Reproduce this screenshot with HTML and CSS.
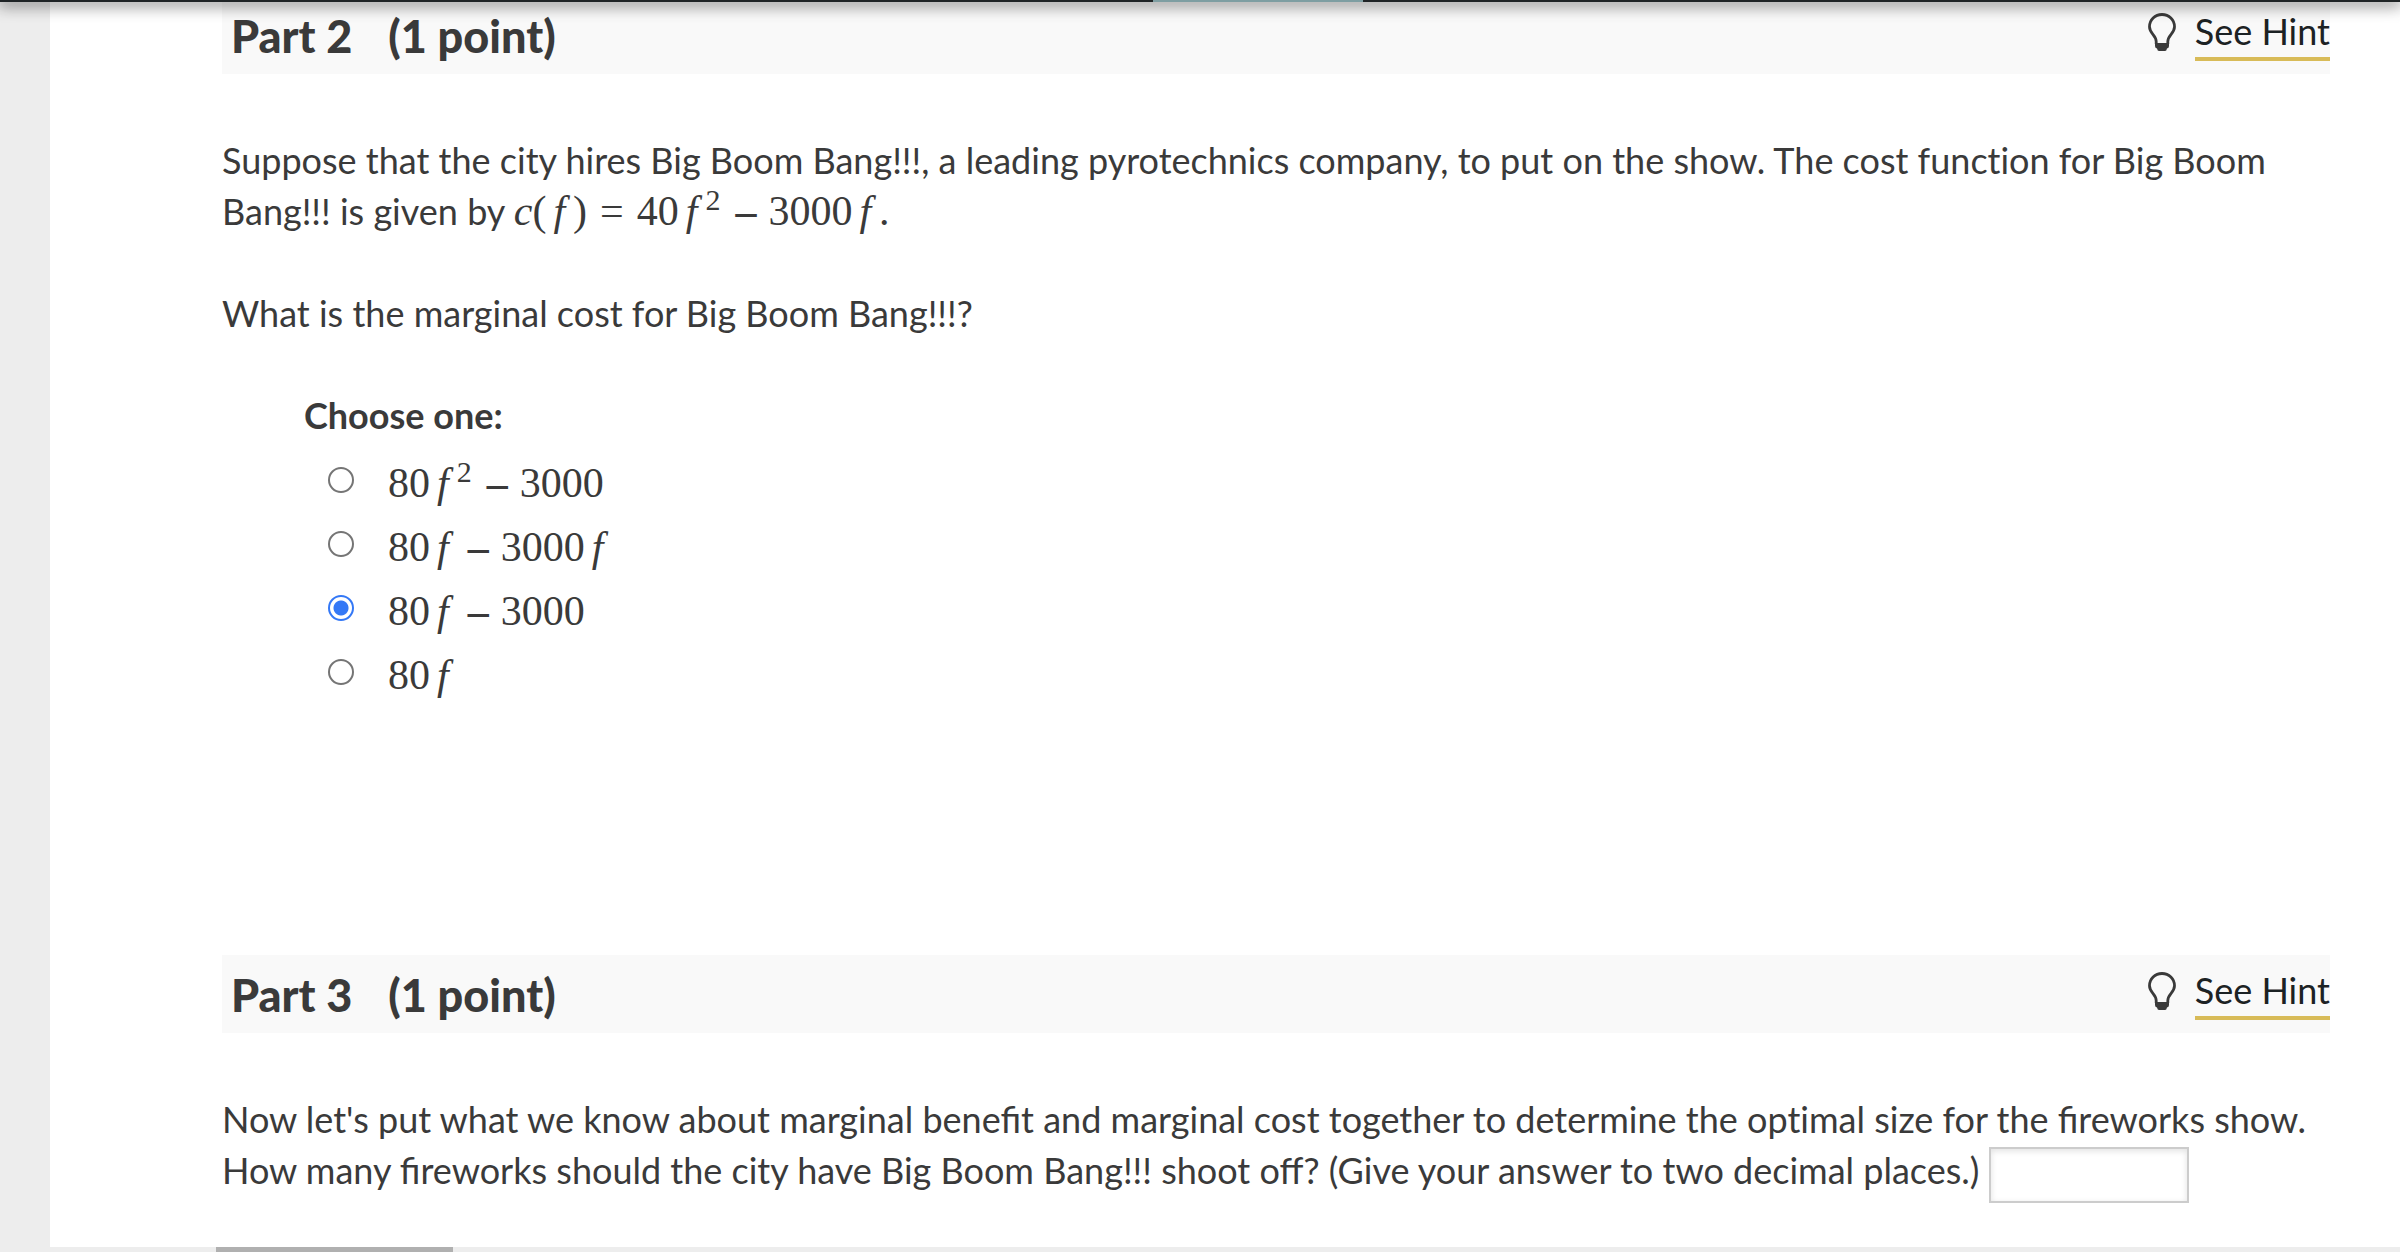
FILE: index.html
```
<!DOCTYPE html>
<html lang="en">
<head>
<meta charset="utf-8">
<title>Fireworks show: marginal cost</title>
<link rel="stylesheet" href="styles.css">
</head>
<body>
<div class="topbar"><div class="topbar-tab"></div></div>
<main class="page">
  <section class="part">
    <header class="part-header">
      <h2 class="part-title"><span>Part 2</span><span>(1 point)</span></h2>
      <div class="hint">
        <svg class="bulb" viewBox="0 0 28 38" aria-hidden="true"><path d="M8.200 31V28.500C8.200 22 1.500 20.500 1.500 13.700C1.500 6.500 7 1.500 14 1.500S26.500 6.500 26.500 13.700C26.500 20.500 19.800 22 19.800 28.500V31" fill="none" stroke="#3a3a3a" stroke-width="2.800"/><path d="M7 30H21V33Q21 35 19 35.500Q18.500 38 17 38H11Q9.500 38 9 35.500Q7 35 7 33Z" fill="#3a3a3a"/></svg>
        <a class="hint-link" href="#hint-2">See Hint</a>
      </div>
    </header>
    <div class="part-body">
      <p class="text">Suppose that the city hires Big Boom Bang!!!, a leading pyrotechnics company, to put on the show. The cost <span class="plain">function</span> for Big Boom Bang!!! is given by <span class="math"><i>c</i>(<i class="f">f</i>)<span class="rel">=</span>40<i class="f">f</i><sup>2</sup><span class="op">–</span>3000<i class="f">f</i>.</span></p>
      <p class="text">What is the marginal cost for Big Boom Bang!!!?</p>
      <fieldset class="choices">
        <legend class="choices-title">Choose one:</legend>
        <label class="choice"><input class="radio" type="radio" name="cost"><span class="math">80<i class="f">f</i><sup>2</sup><span class="op">–</span>3000</span></label>
        <label class="choice"><input class="radio" type="radio" name="cost"><span class="math">80<i class="f">f</i><span class="op">–</span>3000<i class="f">f</i></span></label>
        <label class="choice"><input class="radio" type="radio" name="cost" checked><span class="math">80<i class="f">f</i><span class="op">–</span>3000</span></label>
        <label class="choice"><input class="radio" type="radio" name="cost"><span class="math">80<i class="f">f</i></span></label>
      </fieldset>
    </div>
  </section>
  <section class="part">
    <header class="part-header">
      <h2 class="part-title"><span>Part 3</span><span>(1 point)</span></h2>
      <div class="hint">
        <svg class="bulb" viewBox="0 0 28 38" aria-hidden="true"><path d="M8.200 31V28.500C8.200 22 1.500 20.500 1.500 13.700C1.500 6.500 7 1.500 14 1.500S26.500 6.500 26.500 13.700C26.500 20.500 19.800 22 19.800 28.500V31" fill="none" stroke="#3a3a3a" stroke-width="2.800"/><path d="M7 30H21V33Q21 35 19 35.500Q18.500 38 17 38H11Q9.500 38 9 35.500Q7 35 7 33Z" fill="#3a3a3a"/></svg>
        <a class="hint-link" href="#hint-3">See Hint</a>
      </div>
    </header>
    <div class="part-body">
      <p class="text"><label for="answer">Now let's put what we know about marginal benefit and marginal cost together to determine the <span class="plain">optimal</span> size for the fireworks show. How many fireworks should the city have Big Boom Bang!!! shoot off? (Give your answer to two decimal places.)</label><input class="answer" id="answer" type="text"></p>
    </div>
  </section>
</main>
<div class="scroll-track"><div class="scroll-thumb"></div></div>
</body>
</html>
```
FILE: styles.css
```
* {
  box-sizing: border-box;
}

html {
  height: 100%;
}

body {
  display: flex;
  flex-direction: column;
  height: 100%;
  margin: 0;
  overflow: hidden;
  background: #ededed;
  color: #3a3a3a;
  font: 36px/51px Lato, sans-serif;
}

/* Navigation edge that stays over the scrolled page */
.topbar {
  position: fixed;
  inset: 0 0 auto;
  z-index: 1;
  display: flex;
  height: 2px;
  padding-left: 1153px;
  background: #1f2426;
  box-shadow: 0 0 16px 2px rgba(0, 0, 0, 0.8);
}

.topbar-tab {
  width: 210px;
  background: #7e9ea2;
}

.page {
  flex: 1;
  min-height: 0;
  margin: -4px 0 0 50px;
  padding: 0 70px 0 172px;
  background: #fff;
}

.part {
  margin-bottom: 248px;
}

.part-header {
  display: flex;
  justify-content: space-between;
  align-items: flex-start;
  height: 78px;
  padding-left: 9px;
  background: #f9f9f9;
}

.part-title {
  display: flex;
  gap: 36px;
  margin: 0;
  padding-top: 15px;
  font-family: "Lato Black", Lato, sans-serif;
  font-size: 45px;
  font-weight: 900;
}

.hint {
  display: flex;
  align-items: flex-start;
  gap: 19px;
  padding-top: 10px;
}

.bulb {
  width: 28px;
  height: 38px;
  margin-top: 7px;
}

.hint-link {
  height: 55px;
  border-bottom: 4px solid #d8bb58;
  color: #1c2224;
  text-decoration: none;
}

.part-body {
  padding-top: 61px;
}

.text {
  margin: 0 0 51px;
}

/* Keeps "ti" as two separate letters */
.plain {
  font-variant-ligatures: none;
}

.math {
  font: 42px/1 "Liberation Serif", serif;
  white-space: nowrap;
}

.math sup {
  margin-right: 4px;
  font-size: 30px;
  line-height: 0;
  vertical-align: 15px;
}

.f {
  margin: 0 8px 0 7px;
}

.op {
  margin: 0 12px 0 11px;
  font-weight: 700;
}

.rel {
  margin: 0 13px;
}

.choices {
  margin: 0;
  padding: 0 0 0 82px;
  border: 0;
}

.choices-title {
  margin: 0 0 10px;
  padding: 0;
  font-weight: 700;
}

.choice {
  display: flex;
  align-items: center;
  gap: 34px;
  height: 64px;
  padding-left: 24px;
}

.radio {
  appearance: none;
  width: 26px;
  height: 26px;
  margin: 0 0 6px;
  border: 2px solid #757575;
  border-radius: 50%;
  background: #fff;
}

.radio:checked {
  border-color: #3478f6;
  background: radial-gradient(circle, #3478f6 7px, #fff 8px);
}

.answer {
  width: 200px;
  height: 56px;
  margin: 0 0 0 10px;
  padding: 0 12px;
  border: 2px solid #ccc;
  background: #fff;
  box-shadow: inset 0 2px 6px rgba(0, 0, 0, 0.12);
  font: inherit;
  vertical-align: middle;
}

.scroll-track {
  height: 5px;
  padding-left: 216px;
}

.scroll-thumb {
  width: 237px;
  height: 5px;
  background: #b0b0b0;
}
```
